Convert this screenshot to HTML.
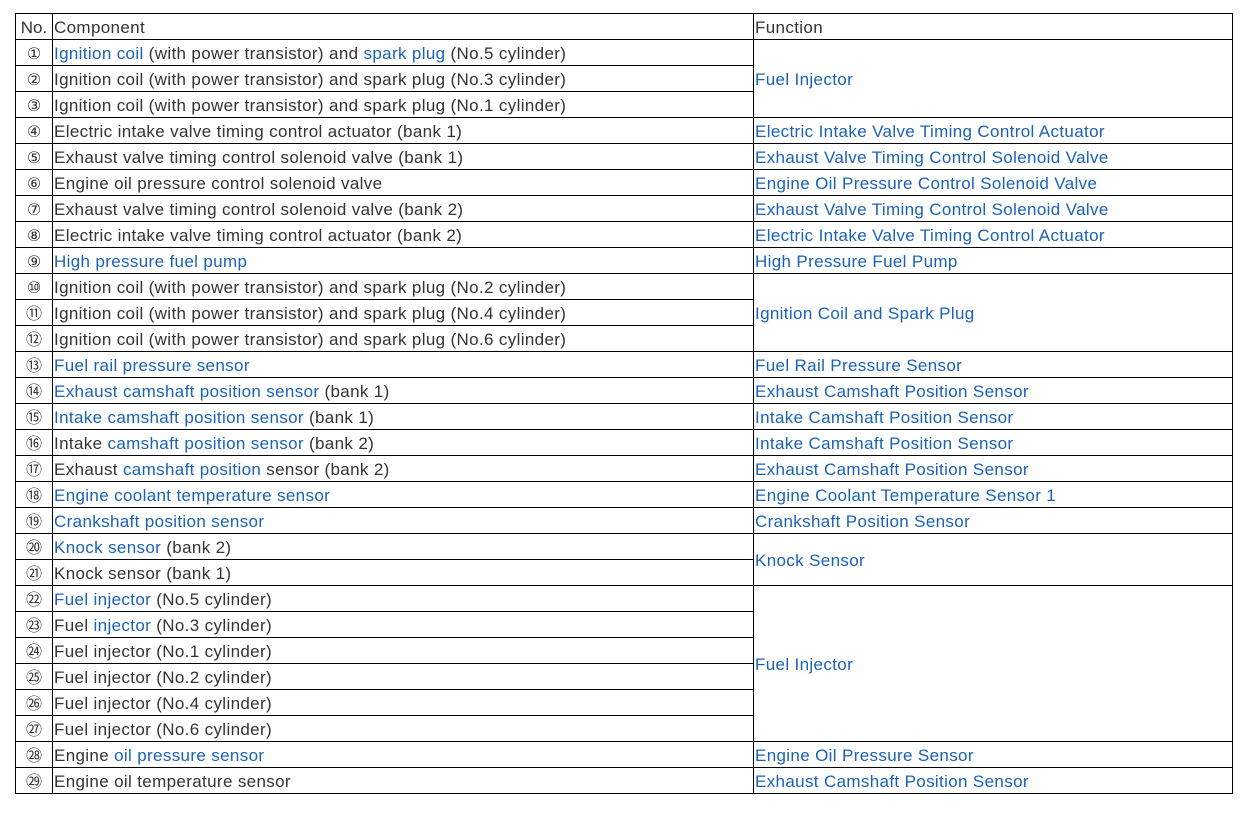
<!DOCTYPE html>
<html><head><meta charset="utf-8"><style>
html,body{margin:0;padding:0;background:#fff;width:1246px;height:815px;overflow:hidden}
table{position:absolute;left:15px;top:13px;border-collapse:collapse;table-layout:fixed;width:1217px;font-family:"Liberation Sans","DejaVu Sans",sans-serif;font-size:17px;letter-spacing:0.35px;color:#333}
td{border:1px solid #000;height:25px;padding:2px 0 0 1px;box-sizing:border-box;white-space:nowrap;overflow:hidden;line-height:23px}
td.n{text-align:center;padding:2px 0 0 0;font-family:"DejaVu Sans","Liberation Sans",sans-serif;font-size:16px;letter-spacing:0}
.b{color:#1a62b8}
</style></head><body>
<table>
<colgroup><col style="width:37px"><col style="width:701px"><col style="width:479px"></colgroup>
<tr><td class="n" style="font-family:'Liberation Sans',sans-serif;font-size:17px">No.</td><td>Component</td><td>Function</td></tr>
<tr><td class="n">①</td><td><span class="b">Ignition coil</span> (with power transistor) and <span class="b">spark plug</span> (No.5 cylinder)</td><td rowspan="3" class="b">Fuel Injector</td></tr>
<tr><td class="n">②</td><td>Ignition coil (with power transistor) and spark plug (No.3 cylinder)</td></tr>
<tr><td class="n">③</td><td>Ignition coil (with power transistor) and spark plug (No.1 cylinder)</td></tr>
<tr><td class="n">④</td><td>Electric intake valve timing control actuator (bank 1)</td><td class="b">Electric Intake Valve Timing Control Actuator</td></tr>
<tr><td class="n">⑤</td><td>Exhaust valve timing control solenoid valve (bank 1)</td><td class="b">Exhaust Valve Timing Control Solenoid Valve</td></tr>
<tr><td class="n">⑥</td><td>Engine oil pressure control solenoid valve</td><td class="b">Engine Oil Pressure Control Solenoid Valve</td></tr>
<tr><td class="n">⑦</td><td>Exhaust valve timing control solenoid valve (bank 2)</td><td class="b">Exhaust Valve Timing Control Solenoid Valve</td></tr>
<tr><td class="n">⑧</td><td>Electric intake valve timing control actuator (bank 2)</td><td class="b">Electric Intake Valve Timing Control Actuator</td></tr>
<tr><td class="n">⑨</td><td class="b">High pressure fuel pump</td><td class="b">High Pressure Fuel Pump</td></tr>
<tr><td class="n">⑩</td><td>Ignition coil (with power transistor) and spark plug (No.2 cylinder)</td><td rowspan="3" class="b">Ignition Coil and Spark Plug</td></tr>
<tr><td class="n">⑪</td><td>Ignition coil (with power transistor) and spark plug (No.4 cylinder)</td></tr>
<tr><td class="n">⑫</td><td>Ignition coil (with power transistor) and spark plug (No.6 cylinder)</td></tr>
<tr><td class="n">⑬</td><td class="b">Fuel rail pressure sensor</td><td class="b">Fuel Rail Pressure Sensor</td></tr>
<tr><td class="n">⑭</td><td><span class="b">Exhaust camshaft position sensor</span> (bank 1)</td><td class="b">Exhaust Camshaft Position Sensor</td></tr>
<tr><td class="n">⑮</td><td><span class="b">Intake camshaft position sensor</span> (bank 1)</td><td class="b">Intake Camshaft Position Sensor</td></tr>
<tr><td class="n">⑯</td><td>Intake <span class="b">camshaft position sensor</span> (bank 2)</td><td class="b">Intake Camshaft Position Sensor</td></tr>
<tr><td class="n">⑰</td><td>Exhaust <span class="b">camshaft position</span> sensor (bank 2)</td><td class="b">Exhaust Camshaft Position Sensor</td></tr>
<tr><td class="n">⑱</td><td class="b">Engine coolant temperature sensor</td><td class="b">Engine Coolant Temperature Sensor 1</td></tr>
<tr><td class="n">⑲</td><td class="b">Crankshaft position sensor</td><td class="b">Crankshaft Position Sensor</td></tr>
<tr><td class="n">⑳</td><td><span class="b">Knock sensor</span> (bank 2)</td><td rowspan="2" class="b">Knock Sensor</td></tr>
<tr><td class="n">㉑</td><td>Knock sensor (bank 1)</td></tr>
<tr><td class="n">㉒</td><td><span class="b">Fuel injector</span> (No.5 cylinder)</td><td rowspan="6" class="b">Fuel Injector</td></tr>
<tr><td class="n">㉓</td><td>Fuel <span class="b">injector</span> (No.3 cylinder)</td></tr>
<tr><td class="n">㉔</td><td>Fuel injector (No.1 cylinder)</td></tr>
<tr><td class="n">㉕</td><td>Fuel injector (No.2 cylinder)</td></tr>
<tr><td class="n">㉖</td><td>Fuel injector (No.4 cylinder)</td></tr>
<tr><td class="n">㉗</td><td>Fuel injector (No.6 cylinder)</td></tr>
<tr><td class="n">㉘</td><td>Engine <span class="b">oil pressure sensor</span></td><td class="b">Engine Oil Pressure Sensor</td></tr>
<tr><td class="n">㉙</td><td>Engine oil temperature sensor</td><td class="b">Exhaust Camshaft Position Sensor</td></tr>
</table>
</body></html>
